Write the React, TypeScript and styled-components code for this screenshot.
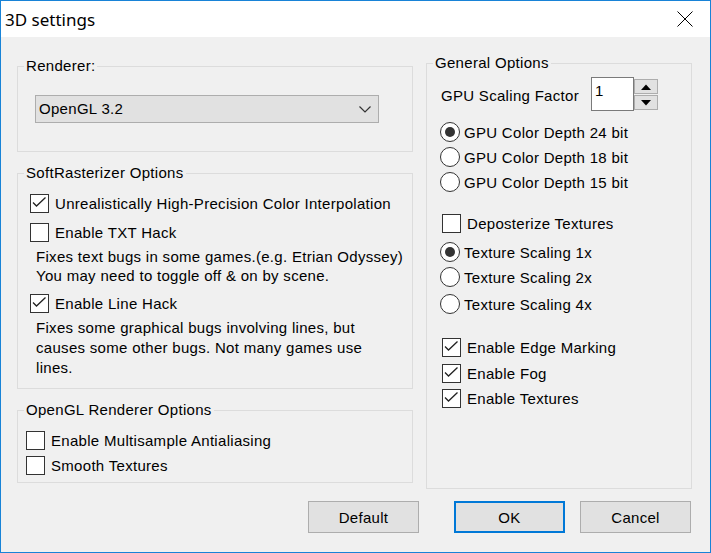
import React from 'react';
import styled, { createGlobalStyle } from 'styled-components';

const GlobalStyle = createGlobalStyle`
  html, body {
    margin: 0;
    padding: 0;
    background: #f0f0f0;
  }
  * {
    box-sizing: border-box;
  }
`;

const FONT = `'Liberation Sans', Arial, sans-serif`;

const Window = styled.div`
  width: 711px;
  height: 553px;
  border: 1px solid #1883d7;
  background: #f0f0f0;
  display: flex;
  flex-direction: column;
  font-family: ${FONT};
  font-size: 15px;
  letter-spacing: 0.3px;
  color: #000;
  overflow: hidden;
`;

const TitleBar = styled.div`
  height: 36px;
  flex: 0 0 36px;
  background: #fff;
  display: flex;
  align-items: center;
  justify-content: space-between;
  padding: 0 17px 0 4px;
`;

const Title = styled.span`
  font-family: 'Noto Sans', 'Open Sans', sans-serif;
  font-size: 17px;
  letter-spacing: 0;
  line-height: 20px;
  margin-top: 1px;
`;

const CloseButton = styled.div`
  width: 16px;
  height: 16px;
  display: flex;
  svg {
    display: block;
  }
`;

const Body = styled.div`
  flex: 1;
  display: flex;
  flex-direction: column;
  padding: 17px 18px 0 16px;
`;

const Columns = styled.div`
  display: flex;
  align-items: flex-start;
  gap: 13px;
`;

const LeftColumn = styled.div`
  width: 396px;
  padding-top: 3px;
  display: flex;
  flex-direction: column;
  gap: 12px;
`;

const RightColumn = styled.div`
  width: 266px;
`;

const Group = styled.fieldset`
  margin: 0;
  padding: 0;
  min-width: 0;
  border: 1px solid #dcdcdc;
`;

const Legend = styled.legend`
  margin-left: 6px;
  padding: 0 2px;
  line-height: 18px;
  font-size: 15px;
`;

const GroupContent = styled.div<{ $pt: number; $pb: number; $pl: number }>`
  display: flex;
  flex-direction: column;
  padding: ${(p) => `${p.$pt}px 0 ${p.$pb}px ${p.$pl}px`};
`;

const Select = styled.div`
  width: 344px;
  height: 28px;
  background: #e1e1e1;
  border: 1px solid #adadad;
  display: flex;
  align-items: center;
  justify-content: space-between;
  padding: 0 7px 0 3px;
  line-height: 18px;
  svg {
    display: block;
  }
`;

const Row = styled.div<{ $mt?: number; $pl?: number }>`
  display: flex;
  align-items: center;
  margin-top: ${(p) => p.$mt || 0}px;
  padding-left: ${(p) => p.$pl || 0}px;
  white-space: nowrap;
`;

const CheckBox = styled.span`
  width: 19px;
  height: 19px;
  flex: 0 0 19px;
  border: 1px solid #333;
  background: #fff;
  margin-right: 6px;
  svg {
    display: block;
  }
`;

const RadioCircle = styled.span`
  width: 20px;
  height: 20px;
  flex: 0 0 20px;
  border: 1px solid #333;
  border-radius: 50%;
  background: #fff;
  margin-right: 4px;
  display: flex;
  align-items: center;
  justify-content: center;
`;

const RadioDot = styled.span`
  width: 10px;
  height: 10px;
  border-radius: 50%;
  background: #333;
`;

const RowLabel = styled.span`
  line-height: 19px;
`;

const Note = styled.div<{ $mt: number; $lh: number }>`
  margin-top: ${(p) => p.$mt}px;
  padding-left: 6px;
  line-height: ${(p) => p.$lh}px;
  white-space: nowrap;
`;

const ScaleRow = styled.div`
  display: flex;
  align-items: center;
  height: 34px;
  padding-left: 14px;
`;

const ScaleLabel = styled.span`
  width: 150px;
  line-height: 19px;
  margin-top: 2px;
`;

const SpinInput = styled.div`
  width: 43px;
  height: 34px;
  background: #fff;
  border: 1px solid #7a7a7a;
  padding: 3px 0 0 3px;
  line-height: 19px;
`;

const SpinButtons = styled.div`
  display: flex;
  flex-direction: column;
  justify-content: space-between;
  height: 31px;
  align-self: flex-start;
  margin-top: 2px;
`;

const SpinButton = styled.div`
  width: 24px;
  height: 15px;
  background: #e1e1e1;
  border: 1px solid #adadad;
  display: flex;
  align-items: center;
  justify-content: center;
  svg {
    display: block;
  }
`;

const ButtonRow = styled.div`
  display: flex;
  justify-content: flex-end;
  margin-top: 12px;
  padding-right: 1px;
`;

const Button = styled.button<{ $primary?: boolean; $ml: number }>`
  width: 111px;
  height: 32px;
  margin-left: ${(p) => p.$ml}px;
  background: #e1e1e1;
  border: ${(p) => (p.$primary ? '2px solid #0078d7' : '1px solid #adadad')};
  font-family: ${FONT};
  font-size: 15px;
  letter-spacing: 0.3px;
  color: #000;
  padding: 0;
`;

const Check = ({ checked }: { checked?: boolean }) => (
  <CheckBox>
    {checked && (
      <svg width="17" height="17" viewBox="0 0 17 17">
        <polyline points="2,7.5 5.5,11 14.5,2.5" fill="none" stroke="#222" strokeWidth="1.3" />
      </svg>
    )}
  </CheckBox>
);

type OptionProps = { label: string; checked?: boolean; mt?: number; pl?: number };

const CheckRow = ({ label, checked, mt, pl }: OptionProps) => (
  <Row $mt={mt} $pl={pl}>
    <Check checked={checked} />
    <RowLabel>{label}</RowLabel>
  </Row>
);

const RadioRow = ({ label, checked, mt, pl }: OptionProps) => (
  <Row $mt={mt} $pl={pl}>
    <RadioCircle>{checked && <RadioDot />}</RadioCircle>
    <RowLabel>{label}</RowLabel>
  </Row>
);

export default function App() {
  return (
    <>
      <GlobalStyle />
      <Window>
        <TitleBar>
          <Title>3D settings</Title>
          <CloseButton>
            <svg width="16" height="16" viewBox="0 0 16 16">
              <path d="M0.5 0.5 L15.5 15.5 M15.5 0.5 L0.5 15.5" stroke="#000" strokeWidth="1" />
            </svg>
          </CloseButton>
        </TitleBar>
        <Body>
          <Columns>
            <LeftColumn>
              <Group>
                <Legend>Renderer:</Legend>
                <GroupContent $pt={20} $pb={28} $pl={17}>
                  <Select>
                    <span>OpenGL 3.2</span>
                    <svg width="12" height="7" viewBox="0 0 12 7">
                      <polyline points="0.5,0.5 6,6 11.5,0.5" fill="none" stroke="#333" strokeWidth="1.2" />
                    </svg>
                  </Select>
                </GroupContent>
              </Group>

              <Group>
                <Legend>SoftRasterizer Options</Legend>
                <GroupContent $pt={12} $pb={10} $pl={12}>
                  <CheckRow label="Unrealistically High-Precision Color Interpolation" checked />
                  <CheckRow label="Enable TXT Hack" mt={10} />
                  <Note $mt={5} $lh={19}>
                    Fixes text bugs in some games.(e.g. Etrian Odyssey)
                    <br />
                    You may need to toggle off &amp; on by scene.
                  </Note>
                  <CheckRow label="Enable Line Hack" checked mt={9} />
                  <Note $mt={5} $lh={20}>
                    Fixes some graphical bugs involving lines, but
                    <br />
                    causes some other bugs. Not many games use
                    <br />
                    lines.
                  </Note>
                </GroupContent>
              </Group>

              <Group>
                <Legend>OpenGL Renderer Options</Legend>
                <GroupContent $pt={12} $pb={7} $pl={8}>
                  <CheckRow label="Enable Multisample Antialiasing" />
                  <CheckRow label="Smooth Textures" mt={6} />
                </GroupContent>
              </Group>
            </LeftColumn>

            <RightColumn>
              <Group>
                <Legend>General Options</Legend>
                <GroupContent $pt={5} $pb={80} $pl={0}>
                  <ScaleRow>
                    <ScaleLabel>GPU Scaling Factor</ScaleLabel>
                    <SpinInput>1</SpinInput>
                    <SpinButtons>
                      <SpinButton>
                        <svg width="10" height="6" viewBox="0 0 10 6">
                          <polygon points="0,6 5,0.5 10,6" fill="#000" />
                        </svg>
                      </SpinButton>
                      <SpinButton>
                        <svg width="10" height="6" viewBox="0 0 10 6">
                          <polygon points="0,0 10,0 5,5.5" fill="#000" />
                        </svg>
                      </SpinButton>
                    </SpinButtons>
                  </ScaleRow>
                  <RadioRow label="GPU Color Depth 24 bit" checked mt={11} pl={13} />
                  <RadioRow label="GPU Color Depth 18 bit" mt={5} pl={13} />
                  <RadioRow label="GPU Color Depth 15 bit" mt={5} pl={13} />
                  <CheckRow label="Deposterize Textures" mt={22} pl={15} />
                  <RadioRow label="Texture Scaling 1x" checked mt={9} pl={13} />
                  <RadioRow label="Texture Scaling 2x" mt={5} pl={13} />
                  <RadioRow label="Texture Scaling 4x" mt={7} pl={13} />
                  <CheckRow label="Enable Edge Marking" checked mt={24} pl={15} />
                  <CheckRow label="Enable Fog" checked mt={7} pl={15} />
                  <CheckRow label="Enable Textures" checked mt={6} pl={15} />
                </GroupContent>
              </Group>
            </RightColumn>
          </Columns>

          <ButtonRow>
            <Button $ml={0}>Default</Button>
            <Button $ml={35} $primary>
              OK
            </Button>
            <Button $ml={15}>Cancel</Button>
          </ButtonRow>
        </Body>
      </Window>
    </>
  );
}
